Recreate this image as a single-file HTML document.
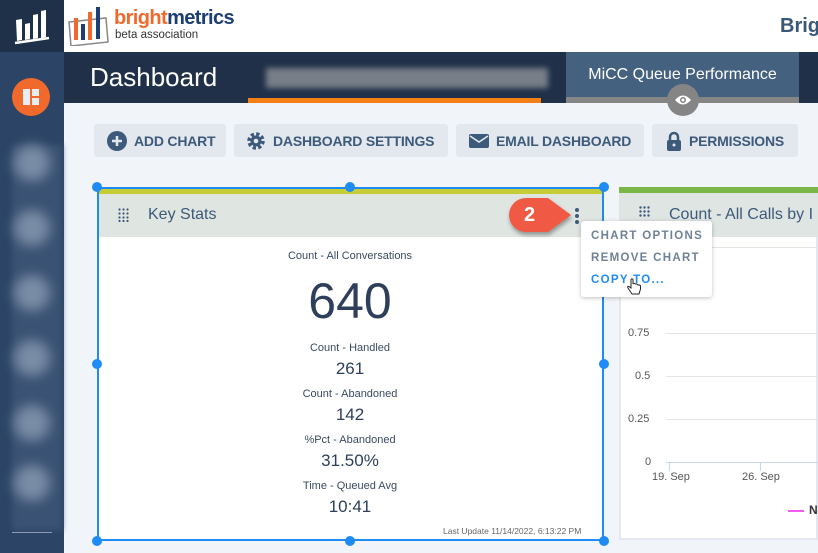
<!DOCTYPE html>
<html><head><meta charset="utf-8"><style>
*{margin:0;padding:0;box-sizing:border-box}
body{width:818px;height:553px;overflow:hidden;background:#f1f4f9;font-family:"Liberation Sans",sans-serif;position:relative}
.a{position:absolute}
.btn{position:absolute;top:124px;height:33px;background:#e3e8ef;border-radius:3px;color:#3d5a7a;font-weight:bold;font-size:14px;letter-spacing:-0.2px;display:flex;align-items:center;padding-left:13px;gap:7px}
.h{position:absolute;width:10px;height:10px;border-radius:50%;background:#1f8bf5}
.lbl{position:absolute;left:150px;width:400px;text-align:center;color:#3a4a60;font-size:11px}
.val{position:absolute;left:150px;width:400px;text-align:center;color:#2d3f5a;font-size:17px}
.blur{position:absolute;left:14px;width:36px;height:36px;border-radius:50%;background:#8a9bb3;filter:blur(6px);opacity:.8}
</style></head><body>
<div class="a" style="left:0;top:0;width:64px;height:553px;background:#2c4566"></div>
<div class="a" style="left:0;top:0;width:64px;height:52px;background:#1f3049"></div>
<svg class="a" style="left:14px;top:8px" width="38" height="38" viewBox="0 0 38 38"><path d="M2 12 L8 11 L8 32 L3 33Z M11 16 L16 15 L16 31 L11 32Z M19 7 L24 6 L24 30 L19 31Z M27 3 L32 2 L32 29 L27 30Z" fill="#fff"/><path d="M1 35 L35 30" stroke="#fff" stroke-width="2.5"/></svg>
<div class="a" style="left:12px;top:78px;width:38px;height:38px;border-radius:50%;background:#f26a2b"></div>
<div class="a" style="left:23px;top:89px;width:7px;height:16px;background:#e8edf3"></div>
<div class="a" style="left:32px;top:89px;width:7px;height:7px;background:#e8edf3"></div>
<div class="a" style="left:32px;top:98px;width:7px;height:7px;background:#e8edf3"></div>
<div class="a" style="left:12px;top:145px;width:50px;height:385px;background:#3a5273;filter:blur(3px)"></div>
<div class="blur" style="top:145px"></div><div class="blur" style="top:210px"></div><div class="blur" style="top:275px"></div><div class="blur" style="top:340px"></div><div class="blur" style="top:405px"></div><div class="blur" style="top:465px"></div>
<div class="a" style="left:12px;top:532px;width:40px;height:1px;background:#8a9bb3"></div>
<div class="a" style="left:64px;top:0;width:754px;height:52px;background:#fff"></div>
<svg class="a" style="left:68px;top:6px" width="42" height="40" viewBox="0 0 42 40"><path d="M1 16 L38 12 L40 36 L3 40Z" fill="none" stroke="#888" stroke-width="1.5"/><rect x="6" y="12" width="4" height="22" fill="#f26a2b"/><rect x="13" y="18" width="4" height="16" fill="#1d3e74"/><rect x="20" y="6" width="4" height="28" fill="#f26a2b"/><rect x="28" y="1" width="4" height="32" fill="#1d3e74"/></svg>
<div class="a" style="left:114px;top:7px;font-size:20px;font-weight:bold;letter-spacing:-0.6px"><span style="color:#f26a2b">bright</span><span style="color:#1d3e74">metrics</span></div>
<div class="a" style="left:115px;top:29px;font-size:11.5px;color:#333">beta association</div>
<div class="a" style="left:780px;top:15px;font-size:20px;font-weight:bold;color:#3a5878">Brigh</div>
<div class="a" style="left:64px;top:52px;width:754px;height:51px;background:#203049"></div>
<div class="a" style="left:90px;top:62px;font-size:26px;color:#fff">Dashboard</div>
<div class="a" style="left:266px;top:68px;width:282px;height:20px;background:#777e88;filter:blur(3px)"></div>
<div class="a" style="left:248px;top:98px;width:293px;height:5px;background:#f57f17"></div>
<div class="a" style="left:566px;top:52px;width:233px;height:51px;background:#44617f"></div>
<div class="a" style="left:566px;top:97px;width:233px;height:6px;background:#858585"></div>
<div class="a" style="left:566px;top:66px;width:233px;text-align:center;color:#fff;font-size:16px">MiCC Queue Performance</div>
<div class="a" style="left:667px;top:84px;width:32px;height:32px;border-radius:50%;background:#858585"></div>
<svg class="a" style="left:674px;top:93px" width="18" height="14" viewBox="0 0 18 14"><path d="M1 7 Q9 -2 17 7 Q9 16 1 7Z" fill="#fff"/><circle cx="9" cy="7" r="3" fill="#858585"/><circle cx="9" cy="7" r="1.5" fill="#fff"/></svg>
<div class="btn" style="left:94px;width:132px"><svg width="20" height="20"><circle cx="10" cy="10" r="10" fill="#3d5a7a"/><path d="M10 5V15M5 10H15" stroke="#e3e8ef" stroke-width="2.5"/></svg>ADD CHART</div>
<div class="btn" style="left:234px;width:214px;padding-left:12px"><svg width="20" height="20" viewBox="0 0 20 20"><circle cx="10" cy="10" r="6.5" fill="none" stroke="#3d5a7a" stroke-width="4.5" stroke-dasharray="3 2.1"/><circle cx="10" cy="10" r="5.5" fill="#3d5a7a"/><circle cx="10" cy="10" r="2.3" fill="#e3e8ef"/></svg>DASHBOARD SETTINGS</div>
<div class="btn" style="left:456px;width:188px;padding-left:13px"><svg width="20" height="16"><rect x="0" y="1" width="20" height="14" rx="2" fill="#3d5a7a"/><path d="M1 3L10 9L19 3" stroke="#e3e8ef" stroke-width="1.6" fill="none"/></svg>EMAIL DASHBOARD</div>
<div class="btn" style="left:652px;width:146px;padding-left:14px"><svg width="16" height="20"><path d="M4 9V6a4 4 0 0 1 8 0v3" stroke="#3d5a7a" stroke-width="2.5" fill="none"/><rect x="1" y="9" width="14" height="11" rx="2" fill="#3d5a7a"/><circle cx="8" cy="14" r="1.5" fill="#e3e8ef"/></svg>PERMISSIONS</div>
<div class="a" style="left:619px;top:187px;width:199px;height:353px;background:#fff;border:2px solid #e4e8ee"></div>
<div class="a" style="left:619px;top:187px;width:199px;height:6px;background:#7ab648"></div>
<div class="a" style="left:619px;top:193px;width:199px;height:44px;background:#dfe5e2"></div>
<div class="a" style="left:622px;top:247px;width:196px;height:1px;background:#e2e6ea"></div>
<div class="a" style="left:669px;top:206px;font-size:16px;color:#3d5a7a">Count - All Calls by I</div>
<svg class="a" style="left:639px;top:206px" width="12" height="12"><g fill="#3d5a7a"><circle cx="1.5" cy="1.5" r="1.2"/><circle cx="5.5" cy="1.5" r="1.2"/><circle cx="9.5" cy="1.5" r="1.2"/><circle cx="1.5" cy="5.5" r="1.2"/><circle cx="5.5" cy="5.5" r="1.2"/><circle cx="9.5" cy="5.5" r="1.2"/><circle cx="1.5" cy="9.5" r="1.2"/><circle cx="5.5" cy="9.5" r="1.2"/><circle cx="9.5" cy="9.5" r="1.2"/></g></svg>
<div class="a" style="left:666px;top:333px;width:152px;height:1px;background:#e4e4e4"></div>
<div class="a" style="left:666px;top:376px;width:152px;height:1px;background:#e4e4e4"></div>
<div class="a" style="left:666px;top:419px;width:152px;height:1px;background:#e4e4e4"></div>
<div class="a" style="left:666px;top:462px;width:152px;height:1px;background:#c8d6ea"></div>
<div class="a" style="left:669px;top:462px;width:1px;height:9px;background:#c8d6ea"></div>
<div class="a" style="left:760px;top:462px;width:1px;height:9px;background:#c8d6ea"></div>
<div class="a" style="left:628px;top:327px;font-size:11px;color:#555">0.75</div>
<div class="a" style="left:635px;top:370px;font-size:11px;color:#555">0.5</div>
<div class="a" style="left:628px;top:413px;font-size:11px;color:#555">0.25</div>
<div class="a" style="left:645px;top:456px;font-size:11px;color:#555">0</div>
<div class="a" style="left:652px;top:471px;font-size:11px;color:#555">19. Sep</div>
<div class="a" style="left:742px;top:471px;font-size:11px;color:#555">26. Sep</div>
<div class="a" style="left:788px;top:510px;width:16px;height:2px;background:#f45bf0"></div>
<div class="a" style="left:809px;top:503px;font-size:12px;font-weight:bold;color:#333">N</div>
<div class="a" style="left:97px;top:187px;width:507px;height:354px;background:#fff;border:2px solid #1f8bf5"></div>
<div class="a" style="left:99px;top:189px;width:503px;height:5px;background:#c4cc36"></div>
<div class="a" style="left:99px;top:194px;width:503px;height:43px;background:#dfe5e0"></div>
<svg class="a" style="left:118px;top:208px" width="12" height="14"><g fill="#3d5a7a"><circle cx="1.5" cy="1.5" r="1.1"/><circle cx="5.5" cy="1.5" r="1.1"/><circle cx="9.5" cy="1.5" r="1.1"/><circle cx="1.5" cy="5.5" r="1.1"/><circle cx="5.5" cy="5.5" r="1.1"/><circle cx="9.5" cy="5.5" r="1.1"/><circle cx="1.5" cy="9.5" r="1.1"/><circle cx="5.5" cy="9.5" r="1.1"/><circle cx="9.5" cy="9.5" r="1.1"/><circle cx="1.5" cy="13" r="1.1"/><circle cx="5.5" cy="13" r="1.1"/><circle cx="9.5" cy="13" r="1.1"/></g></svg>
<div class="a" style="left:148px;top:206px;font-size:16px;color:#3d5a7a">Key Stats</div>
<div class="a" style="left:575px;top:208px;width:4px;height:4px;border-radius:50%;background:#3d5a7a"></div>
<div class="a" style="left:575px;top:214px;width:4px;height:4px;border-radius:50%;background:#3d5a7a"></div>
<div class="a" style="left:575px;top:220px;width:4px;height:4px;border-radius:50%;background:#3d5a7a"></div>
<div class="lbl" style="top:250px">Count - All Conversations</div>
<div class="a" style="left:150px;top:272px;width:400px;text-align:center;color:#2d3f5a;font-size:50px">640</div>
<div class="lbl" style="top:342px">Count - Handled</div>
<div class="val" style="top:359px">261</div>
<div class="lbl" style="top:388px">Count - Abandoned</div>
<div class="val" style="top:405px">142</div>
<div class="lbl" style="top:434px">%Pct - Abandoned</div>
<div class="val" style="top:451px">31.50%</div>
<div class="lbl" style="top:480px">Time - Queued Avg</div>
<div class="val" style="top:497px">10:41</div>
<div class="a" style="left:443px;top:526px;font-size:8.5px;color:#666">Last Update 11/14/2022, 6:13:22 PM</div>
<div class="h" style="left:92px;top:182px"></div><div class="h" style="left:345px;top:182px"></div><div class="h" style="left:599px;top:182px"></div>
<div class="h" style="left:92px;top:359px"></div><div class="h" style="left:599px;top:359px"></div>
<div class="h" style="left:92px;top:536px"></div><div class="h" style="left:345px;top:536px"></div><div class="h" style="left:599px;top:536px"></div>
<svg class="a" style="left:508px;top:197px;filter:drop-shadow(1px 3px 2px rgba(0,0,0,.35))" width="66" height="40"><path d="M18 1 H40 L63 18 L40 35 H18 A17 17 0 0 1 18 1Z" fill="#f05a45"/></svg>
<div class="a" style="left:524px;top:204px;font-size:20px;font-weight:bold;color:#fff">2</div>
<div class="a" style="left:581px;top:221px;width:131px;height:76px;background:#fff;border-radius:3px;box-shadow:0 1px 4px rgba(0,0,0,.25)"></div>
<div class="a" style="left:591px;top:230px;font-size:11.5px;font-weight:bold;letter-spacing:1.3px;color:#6f8296">CHART OPTIONS</div>
<div class="a" style="left:591px;top:252px;font-size:11.5px;font-weight:bold;letter-spacing:1.3px;color:#6f8296">REMOVE CHART</div>
<div class="a" style="left:591px;top:274px;font-size:11.5px;font-weight:bold;letter-spacing:1.3px;color:#1f8bf5">COPY TO...</div>
<svg class="a" style="left:626px;top:278px" width="16" height="18"><path d="M5 1.5 V10 L3 8.5 Q1 8 2 10 L6 16 H13 L14.5 11 V8 Q14 6.5 12 7 Q11 5.5 9.5 6 Q8.5 5 7 5.5 V1.5 Q6 0 5 1.5Z" fill="#fff" stroke="#222" stroke-width="1"/></svg>
</body></html>
